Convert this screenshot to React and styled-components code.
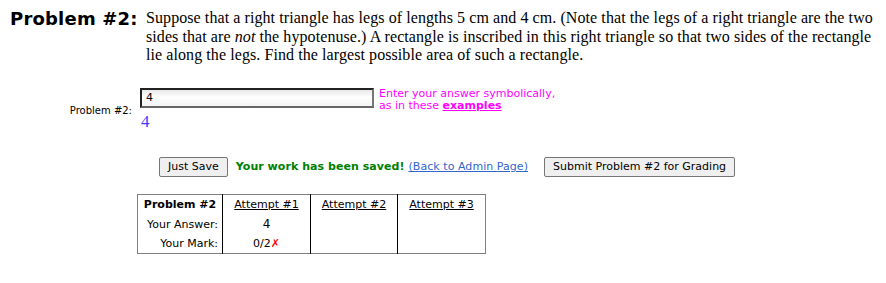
import React from "react";
import styled, { createGlobalStyle } from "styled-components";

const Global = createGlobalStyle`
  html, body { margin: 0; padding: 0; background: #fff; }
  body { font-family: "DejaVu Sans", Verdana, sans-serif; color: #000; }
`;

const Page = styled.div`
  padding: 9px 10px 0 10px;
`;

const Header = styled.div`
  display: flex;
  align-items: flex-start;
`;

const Title = styled.h2`
  margin: 0;
  width: 136px;
  flex: none;
  font-family: "DejaVu Sans", Verdana, sans-serif;
  font-weight: bold;
  font-size: 18px;
  letter-spacing: 0.2px;
  line-height: 19px;
  white-space: nowrap;
`;

const Statement = styled.div`
  flex: 1;
  font-family: "Liberation Serif", "Times New Roman", serif;
  font-size: 16px;
  letter-spacing: 0.08px;
  line-height: 18.5px;
`;

const AnswerRow = styled.div`
  display: grid;
  grid-template-columns: 130px auto;
  margin-top: 23px;
`;

const Label = styled.div`
  font-size: 10px;
  text-align: right;
  padding-right: 8px;
  padding-top: 17px;
  padding-left: 48px;
  white-space: nowrap;
`;

const InputCol = styled.div`
  display: flex;
  flex-direction: column;
`;

const InputLine = styled.div`
  display: flex;
  align-items: flex-start;
  gap: 5px;
`;

const AnswerInput = styled.input`
  box-sizing: border-box;
  width: 234px;
  height: 20px;
  margin: 0;
  padding: 0 4px;
  font-family: "DejaVu Sans", Verdana, sans-serif;
  font-size: 11px;
  color: #000;
  border-style: solid;
  border-width: 2px;
  border-color: #222 #777 #666 #222;
  background: linear-gradient(#e8e8e8, #fff 45%, #f4f4f4);
  outline: none;
`;

const Hint = styled.div`
  color: #ff00ff;
  font-size: 11px;
  line-height: 12px;
  a { color: #ff00ff; font-weight: bold; text-decoration: underline; }
`;

const Preview = styled.div`
  font-family: "Liberation Serif", "Times New Roman", serif;
  font-size: 17px;
  color: #3f3fff;
  padding-left: 1px;
  margin-top: 0px;
`;

const ButtonRow = styled.div`
  display: flex;
  align-items: center;
  padding-left: 149px;
  margin-top: 25px;
  font-size: 11px;
`;

const Btn = styled.button`
  font-family: "DejaVu Sans", Verdana, sans-serif;
  font-size: 11px;
  height: 20px;
  padding: 0 8px;
  margin: 0;
  color: #000;
  background: #efefef;
  border: 1px solid #767676;
  border-radius: 2px;
`;

const Saved = styled.span`
  color: #008000;
  font-weight: bold;
  margin-left: 8px;
  letter-spacing: 0.05px;
`;

const AdminLink = styled.a`
  color: #3366cc;
  text-decoration: underline;
  margin-left: 4px;
  margin-right: 16px;
  letter-spacing: 0.05px;
`;

const Table = styled.table`
  border-collapse: collapse;
  margin-left: 127px;
  margin-top: 17px;
  border: 1px solid #808080;
  font-size: 11px;
`;

const Th = styled.th`
  height: 20px;
  padding: 0 4px;
  font-weight: ${p => (p.$bold ? "bold" : "normal")};
  text-decoration: ${p => (p.$bold ? "none" : "underline")};
  border-left: ${p => (p.$first ? "none" : "1px solid #000")};
  width: ${p => p.$w}px;
  text-align: center;
  vertical-align: middle;
`;

const Td = styled.td`
  height: 19px;
  padding: 0 4px;
  text-align: ${p => (p.$right ? "right" : "center")};
  border-left: ${p => (p.$first ? "none" : "1px solid #000")};
  font-size: ${p => p.$fs || 11}px;
  vertical-align: middle;
`;

const Cross = styled.span`
  color: #ff0000;
`;

export default function App() {
  return (
    <>
      <Global />
      <Page>
        <Header>
          <Title>Problem #2:</Title>
          <Statement>
            Suppose that a right triangle has legs of lengths 5 cm and 4 cm. (Note that the legs of a right
            triangle are the two sides that are <i>not</i> the hypotenuse.) A rectangle is inscribed in this
            right triangle so that two sides of the rectangle lie along the legs. Find the largest possible
            area of such a rectangle.
          </Statement>
        </Header>
        <AnswerRow>
          <Label>Problem #2:</Label>
          <InputCol>
            <InputLine>
              <AnswerInput defaultValue="4" />
              <Hint>
                Enter your answer symbolically,
                <br />
                as in these <a href="#">examples</a>
              </Hint>
            </InputLine>
            <Preview>4</Preview>
          </InputCol>
        </AnswerRow>
        <ButtonRow>
          <Btn>Just Save</Btn>
          <Saved>Your work has been saved!</Saved>
          <AdminLink href="#">(Back to Admin Page)</AdminLink>
          <Btn>Submit Problem #2 for Grading</Btn>
        </ButtonRow>
        <Table>
          <thead>
            <tr>
              <Th $bold $first $w={76}>Problem #2</Th>
              <Th $w={79}>Attempt #1</Th>
              <Th $w={78}>Attempt #2</Th>
              <Th $w={79}>Attempt #3</Th>
            </tr>
          </thead>
          <tbody>
            <tr>
              <Td $right $first>Your Answer:</Td>
              <Td $fs={12}>4</Td>
              <Td />
              <Td />
            </tr>
            <tr>
              <Td $right $first>Your Mark:</Td>
              <Td>0/2<Cross>✗</Cross></Td>
              <Td />
              <Td />
            </tr>
          </tbody>
        </Table>
      </Page>
    </>
  );
}
